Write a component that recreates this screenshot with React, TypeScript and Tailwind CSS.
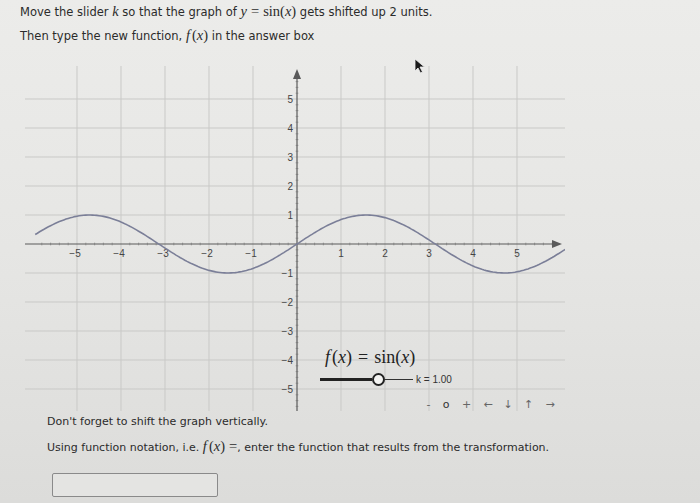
import React from 'react';

const W = 540;
const H = 345;
const X0 = 272;
const Y0 = 178;
const UX = 44;
const UY = 29;

const sx = (x: number) => X0 + x * UX;
const sy = (y: number) => Y0 - y * UY;

const sinePath = (() => {
  const pts: string[] = [];
  for (let x = -5.95; x <= 6.1; x += 0.05) {
    pts.push(`${sx(x).toFixed(1)},${sy(Math.sin(x)).toFixed(1)}`);
  }
  return 'M' + pts.join(' L');
})();

const ints = [-5, -4, -3, -2, -1, 1, 2, 3, 4, 5];

const Graph: React.FC = () => {
  const minorX: number[] = [];
  for (let i = -30; i <= 29; i++) if (i % 5 !== 0) minorX.push(i / 5);
  const minorY: number[] = [];
  for (let i = -29; i <= 29; i++) if (i % 5 !== 0) minorY.push(i / 5);

  return (
    <svg width={W} height={H} viewBox={`0 0 ${W} ${H}`} className="block">
      {/* grid */}
      {ints.map((v) => (
        <line key={'v' + v} x1={sx(v)} y1={0} x2={sx(v)} y2={H} stroke="#c9c9c7" strokeWidth={1} />
      ))}
      {ints.map((v) => (
        <line key={'h' + v} x1={0} y1={sy(v)} x2={W} y2={sy(v)} stroke="#c9c9c7" strokeWidth={1} />
      ))}

      {/* minor ticks */}
      {minorX.map((v) => (
        <line key={'mx' + v} x1={sx(v)} y1={Y0 - 1.5} x2={sx(v)} y2={Y0 + 1.5} stroke="#9a9a9a" strokeWidth={0.7} />
      ))}
      {minorY.map((v) => (
        <line key={'my' + v} x1={X0 - 1.5} y1={sy(v)} x2={X0 + 1.5} y2={sy(v)} stroke="#9a9a9a" strokeWidth={0.7} />
      ))}

      {/* axes */}
      <line x1={0} y1={Y0} x2={W - 10} y2={Y0} stroke="#5a5a5a" strokeWidth={1.2} />
      <polygon points={`${W - 3},${Y0} ${W - 13},${Y0 - 4} ${W - 13},${Y0 + 4}`} fill="#5a5a5a" />
      <line x1={X0} y1={H} x2={X0} y2={10} stroke="#5a5a5a" strokeWidth={1.2} />
      <polygon points={`${X0},${3} ${X0 - 4},${13} ${X0 + 4},${13}`} fill="#5a5a5a" />

      {/* labels */}
      {ints.map((v) => (
        <text
          key={'lx' + v}
          x={sx(v) + (v < 0 ? -2 : 0)}
          y={Y0 + 13}
          textAnchor="middle"
          fontSize={10}
          fill="#454545"
          fontFamily="'Liberation Sans', Arial, sans-serif"
        >
          {v < 0 ? '\u2212' + -v : v}
        </text>
      ))}
      {ints.map((v) => (
        <text
          key={'ly' + v}
          x={X0 - 4}
          y={sy(v) + 3.5}
          textAnchor="end"
          fontSize={10}
          fill="#454545"
          fontFamily="'Liberation Sans', Arial, sans-serif"
        >
          {v < 0 ? '\u2212' + -v : v}
        </text>
      ))}

      {/* curve */}
      <path d={sinePath} fill="none" stroke="#7b7f98" strokeWidth={1.6} />
    </svg>
  );
};

const M: React.FC<{ children: React.ReactNode }> = ({ children }) => (
  <span className="font-['Liberation_Serif',serif] text-[14.5px]">{children}</span>
);

const Eq: React.FC = () => <span className="mx-[4px]">=</span>;

const Fx: React.FC = () => (
  <>
    <i className="mr-[2px]">f</i>(<i>x</i>)
  </>
);

export default function App() {
  return (
    <div className="w-[700px] h-[503px] overflow-hidden bg-linear-to-b from-[#ececea] via-[#e6e6e4] to-[#dcdcda] text-[#2b2b2b] font-['DejaVu_Sans',sans-serif] text-[11px]">
      <div className="pl-[20px] text-[11.5px]">
        <p className="leading-[23px]">
          Move the slider <M><i>k</i></M> so that the graph of{' '}
          <M>
            <i>y</i>
            <Eq />
            sin(<i>x</i>)
          </M>{' '}
          gets shifted up 2 units.
        </p>
        <p className="leading-[23px]">
          Then type the new function,{' '}
          <M>
            <Fx />
          </M>{' '}
          in the answer box
        </p>
      </div>

      <div className="relative ml-[25px] mt-[18px] w-[540px] h-[345px]">
        <Graph />

        {/* mouse cursor */}
        <svg className="absolute left-[389px] top-[-8px]" width="12" height="16" viewBox="0 0 12 16">
          <path d="M1 1 L1 13 L4 10 L6.5 15 L8.5 14 L6 9 L10.5 9 Z" fill="#1a1a1a" stroke="#f0f0f0" strokeWidth="0.8" />
        </svg>

        {/* function label */}
        <div className="absolute left-[300px] top-[278px] font-['Liberation_Serif',serif] text-[18px] text-[#222]">
          <Fx />
          <span className="mx-[6px]">=</span>sin(<i>x</i>)
        </div>

        {/* slider */}
        <div className="absolute left-[295px] top-[306px] flex items-center h-[14px]">
          <div className="w-[52px] h-[3px] bg-[#222]" />
          <div className="w-[13px] h-[13px] rounded-full border-2 border-[#222] bg-[#f4f4f2]" />
          <div className="w-[28px] h-[1px] bg-[#333]" />
          <span className="ml-[3px] font-['Liberation_Sans',Arial,sans-serif] text-[10px] text-[#333]">k = 1.00</span>
        </div>

        {/* controls */}
        <div className="absolute left-[396px] top-[331px] flex items-center font-['DejaVu_Sans',sans-serif] text-[11px] text-[#666]">
          <span className="w-[15px] text-center">-</span>
          <span className="w-[20px] text-center text-[#333]">o</span>
          <span className="w-[21px] text-center">+</span>
          <span className="w-[22px] text-center">←</span>
          <span className="w-[18px] text-center">↓</span>
          <span className="w-[23px] text-center">↑</span>
          <span className="w-[20px] text-center">→</span>
        </div>
      </div>

      <div className="pl-[47px]">
        <p className="mt-[1px] leading-[20px]">Don't forget to shift the graph vertically.</p>
        <p className="mt-[4px] leading-[20px]">
          Using function notation, i.e.{' '}
          <M>
            <Fx />
            <span className="ml-[4px]">=</span>
          </M>
          , enter the function that results from the transformation.
        </p>
        <input
          type="text"
          className="block mt-[15px] ml-[5px] w-[166px] h-[24px] border border-[#8a8a8a] rounded-[2px] bg-[#e4e4e2] outline-none"
        />
      </div>
    </div>
  );
}
